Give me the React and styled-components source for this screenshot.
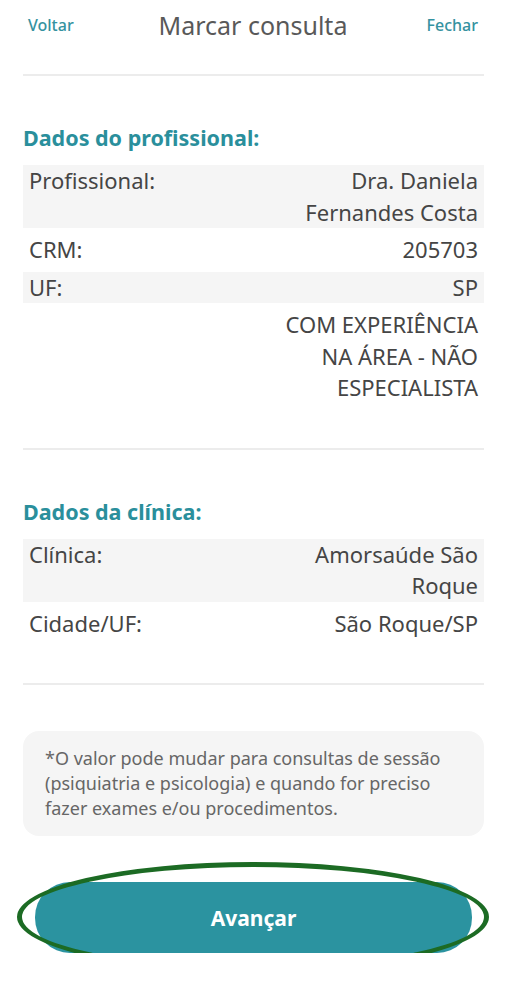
import React from 'react'
import styled, { createGlobalStyle } from 'styled-components'

const Global = createGlobalStyle`
  body {
    margin: 0;
    background: #fff;
    font-family: "Noto Sans", "Open Sans", sans-serif;
  }
`

const profissional = [
  { label: 'Profissional:', value: 'Dra. Daniela Fernandes Costa', shaded: true },
  { label: 'CRM:', value: '205703' },
  { label: 'UF:', value: 'SP', shaded: true },
  { label: '', value: 'COM EXPERIÊNCIA NA ÁREA - NÃO ESPECIALISTA' },
]

const clinica = [
  { label: 'Clínica:', value: 'Amorsaúde São Roque', shaded: true },
  { label: 'Cidade/UF:', value: 'São Roque/SP' },
]

export default function App() {
  return (
    <Page>
      <Global />
      <Header>
        <HeaderLink>Voltar</HeaderLink>
        <Title>Marcar consulta</Title>
        <HeaderLink>Fechar</HeaderLink>
      </Header>
      <Divider />

      <SectionTitle>Dados do profissional:</SectionTitle>
      <Table>
        {profissional.map((row, i) => (
          <Row key={i} $shaded={row.shaded}>
            <Label>{row.label}</Label>
            <Value>{row.value}</Value>
          </Row>
        ))}
      </Table>
      <Divider $gap />

      <SectionTitle>Dados da clínica:</SectionTitle>
      <Table>
        {clinica.map((row, i) => (
          <Row key={i} $shaded={row.shaded}>
            <Label>{row.label}</Label>
            <Value>{row.value}</Value>
          </Row>
        ))}
      </Table>
      <Divider $gap />

      <Note>
        *O valor pode mudar para consultas de sessão (psiquiatria e psicologia) e quando for preciso fazer
        exames e/ou procedimentos.
      </Note>

      <ButtonWrap>
        <Button>Avançar</Button>
        <Highlight />
      </ButtonWrap>
    </Page>
  )
}

const Page = styled.div`
  width: 506px;
  padding: 0 22px 0 23px;
  box-sizing: border-box;
`

const Header = styled.div`
  display: flex;
  align-items: center;
  justify-content: space-between;
  padding: 8px 6px 0 5px;
  height: 34px;
`

const HeaderLink = styled.span`
  font-size: 16px;
  font-weight: 500;
  color: #3592a0;
  width: 60px;
  &:last-child {
    text-align: right;
  }
`

const Title = styled.h1`
  margin: 0;
  font-size: 25px;
  font-weight: 400;
  color: #595959;
`

const Divider = styled.hr`
  border: 0;
  height: 2px;
  background: #ececec;
  margin: ${p => (p.$gap ? '38px 0 0' : '32px 0 0')};
`

const SectionTitle = styled.h2`
  margin: 49px 0 14px;
  font-size: 21.5px;
  line-height: 26px;
  font-weight: 700;
  color: #2a8f9c;
`

const Table = styled.div`
  display: flex;
  flex-direction: column;
`

const Row = styled.div`
  display: flex;
  justify-content: space-between;
  gap: 20px;
  padding: ${p => (p.$shaded ? '0 6px' : '6px 6px')};
  background: ${p => (p.$shaded ? '#f5f5f5' : 'transparent')};
  font-size: 22px;
  line-height: 31.5px;
  color: #454545;
`

const Label = styled.span`
  flex-shrink: 0;
`

const Value = styled.span`
  text-align: right;
  max-width: 215px;
`

const Note = styled.p`
  margin: 46px 0 0;
  padding: 15px 22px;
  background: #f5f5f5;
  border-radius: 16px;
  font-size: 18px;
  line-height: 25px;
  color: #666;
`

const ButtonWrap = styled.div`
  position: relative;
  margin-top: 46px;
  padding: 0 12px;
`

const Button = styled.button`
  display: block;
  width: 100%;
  height: 71px;
  border: 0;
  border-radius: 35px;
  background: #2b93a0;
  color: #fff;
  font-family: inherit;
  font-size: 21px;
  font-weight: 700;
`

const Highlight = styled.div`
  position: absolute;
  left: -6px;
  top: -20px;
  width: 472px;
  height: 110px;
  box-sizing: border-box;
  border: 5px solid #1c6b24;
  border-radius: 50%;
  pointer-events: none;
`
